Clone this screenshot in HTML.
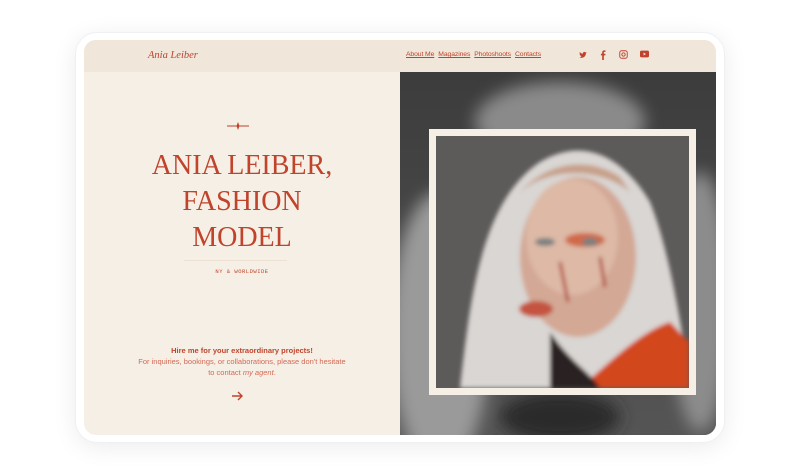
<!DOCTYPE html>
<html><head><meta charset="utf-8"><style>
*{margin:0;padding:0;box-sizing:border-box}
body{width:800px;height:475px;background:#fff;position:relative;overflow:hidden;font-family:"Liberation Sans",sans-serif}
.outer{position:absolute;left:75px;top:32px;width:650px;height:411px;background:#fff;border-radius:22px;box-shadow:0 4px 24px rgba(0,0,0,.08);border:1px solid #eef0f3}
.inner{position:absolute;left:84px;top:40px;width:632px;height:395px;border-radius:12px;overflow:hidden;background:#f5efe5}
.hdr{position:absolute;left:0;top:0;width:632px;height:32px;background:#f0e6da}
.logo{position:absolute;left:64px;top:10px;font-family:"Liberation Serif",serif;font-style:italic;font-size:10.5px;color:#c0432c}
.nav{position:absolute;left:322px;top:11px;font-size:6.8px;color:#c0432c;letter-spacing:-.1px}
.nav span{text-decoration:underline;margin-right:4px}
.soc{position:absolute;top:10px;color:#c0432c;font-size:8px}
h1{position:absolute;left:0;width:316px;top:108px;text-align:center;font-family:"Liberation Serif",serif;font-weight:normal;font-size:28px;line-height:36px;color:#c0432c}
.rule{position:absolute;left:100px;width:103px;top:220px;border-top:1px solid #ebe0d2}
.ny{position:absolute;left:0;width:316px;top:228px;text-align:center;font-family:"Liberation Mono",monospace;font-size:5.5px;color:#c0432c;letter-spacing:.5px}
.p{position:absolute;left:0;width:316px;top:305px;text-align:center;font-size:7.5px;line-height:11px;color:#d46a55}
.p b{color:#c0432c}
.photo{position:absolute;left:316px;top:32px;width:316px;height:363px;background:#4a4a4a}
</style></head><body>
<div class="outer"></div>
<div class="inner">
<div class="hdr">
<div class="logo">Ania Leiber</div>
<div class="nav"><span>About Me</span><span>Magazines</span><span>Photoshoots</span><span>Contacts</span></div>
<svg class="soc" style="left:495px;top:11px" width="8" height="8" viewBox="0 0 24 24"><path fill="#c0432c" d="M23 5a9 9 0 0 1-2.6.7A4.5 4.5 0 0 0 22.4 3a9 9 0 0 1-2.9 1.1A4.5 4.5 0 0 0 11.8 8 12.8 12.8 0 0 1 2.5 3.3 4.5 4.5 0 0 0 3.9 9.3 4.5 4.5 0 0 1 1.8 8.7a4.5 4.5 0 0 0 3.6 4.5 4.5 4.5 0 0 1-2 .1 4.5 4.5 0 0 0 4.200 3.1A9 9 0 0 1 1 18.3 12.8 12.8 0 0 0 20.7 7.5V7A9 9 0 0 0 23 5z"/></svg>
<svg class="soc" style="left:516px;top:10px" width="6" height="10" viewBox="0 0 12 24"><path fill="#c0432c" d="M8 24V13h3.5l.5-4H8V6.5C8 5.4 8.3 4.6 10 4.6h2V1.1C11.6 1 10.4 1 9 1 6 1 4 2.8 4 6.2V9H1v4h3v11z"/></svg>
<svg class="soc" style="left:535px;top:10px" width="9" height="9" viewBox="0 0 24 24"><rect x="2" y="2" width="20" height="20" rx="5" fill="none" stroke="#c0432c" stroke-width="2.5"/><circle cx="12" cy="12" r="4.5" fill="none" stroke="#c0432c" stroke-width="2.5"/></svg>
<svg class="soc" style="left:556px;top:10px" width="9" height="8" viewBox="0 0 24 20"><rect x="0" y="1" width="24" height="18" rx="4" fill="#c0432c"/><path d="M9.5 6v8l6.5-4z" fill="#f0e6da"/></svg>
</div>
<svg style="position:absolute;left:143px;top:82px" width="22" height="8" viewBox="0 0 22 8"><path d="M0 4h22" stroke="#c0432c" stroke-width="1"/><path d="M11 0L12.5 4 11 8 9.5 4z" fill="#c0432c"/></svg>
<h1>ANIA LEIBER,<br>FASHION<br>MODEL</h1>
<div class="rule"></div>
<div class="ny">NY &amp; WORLDWIDE</div>
<div class="p"><b>Hire me for your extraordinary projects!</b><br>For inquiries, bookings, or collaborations, please don't hesitate<br>to contact <i>my agent</i>.</div>
<svg style="position:absolute;left:147px;top:351px" width="12" height="10" viewBox="0 0 12 10"><path d="M1 5h10M7 1l4 4-4 4" stroke="#c0432c" stroke-width="1.4" fill="none"/></svg>
<div class="photo">
<svg width="316" height="363" viewBox="0 0 316 363">
<defs><filter id="b"><feGaussianBlur stdDeviation="8"/></filter><filter id="s"><feGaussianBlur stdDeviation="2"/></filter>
<linearGradient id="bg" x1="0" y1="0" x2="0" y2="1"><stop offset="0" stop-color="#3c3c3c"/><stop offset="1" stop-color="#555"/></linearGradient>
<clipPath id="c"><rect x="36" y="64" width="253" height="252"/></clipPath></defs>
<rect width="316" height="363" fill="url(#bg)"/>
<g filter="url(#b)">
<ellipse cx="160" cy="50" rx="85" ry="40" fill="#8a8a8a"/>
<ellipse cx="40" cy="260" rx="50" ry="140" fill="#9a9a9a"/>
<ellipse cx="300" cy="230" rx="30" ry="130" fill="#8c8c8c"/>
<ellipse cx="160" cy="345" rx="60" ry="25" fill="#2a2a2a"/>
</g>
<rect x="29" y="57" width="267" height="266" fill="#f5efe5"/>
<g clip-path="url(#c)">
<rect x="36" y="64" width="253" height="252" fill="#5d5a5a"/>
<g filter="url(#s)">
<path d="M60 316 C70 230 80 130 140 90 C180 66 220 80 250 130 C270 180 280 250 289 300 L289 316 Z" fill="#d9d6d3"/>
<ellipse cx="178" cy="185" rx="58" ry="80" fill="#d3a895"/>
<ellipse cx="172" cy="165" rx="46" ry="58" fill="#ddb9a6"/>
<path d="M120 120 C150 95 200 95 230 120 L220 105 C190 85 150 88 120 120Z" fill="#c8a08a"/>
<path d="M180 316 C210 290 240 260 270 250 L289 270 L289 316Z" fill="#d2461c"/>
<ellipse cx="136" cy="237" rx="17" ry="8" fill="#c4533f"/>
<ellipse cx="185" cy="168" rx="20" ry="7" fill="#d06a48"/>
<ellipse cx="145" cy="170" rx="10" ry="4" fill="#7a8080"/>
<ellipse cx="190" cy="170" rx="8" ry="4" fill="#7a8080"/>
<path d="M160 190 l8 40 M200 185 l5 30" stroke="#b04030" stroke-width="3"/>
<path d="M150 260 C170 290 190 300 200 316 L150 316Z" fill="#2a2220"/>
</g>
</g>
</svg>
</div>
</div>
</body></html>
